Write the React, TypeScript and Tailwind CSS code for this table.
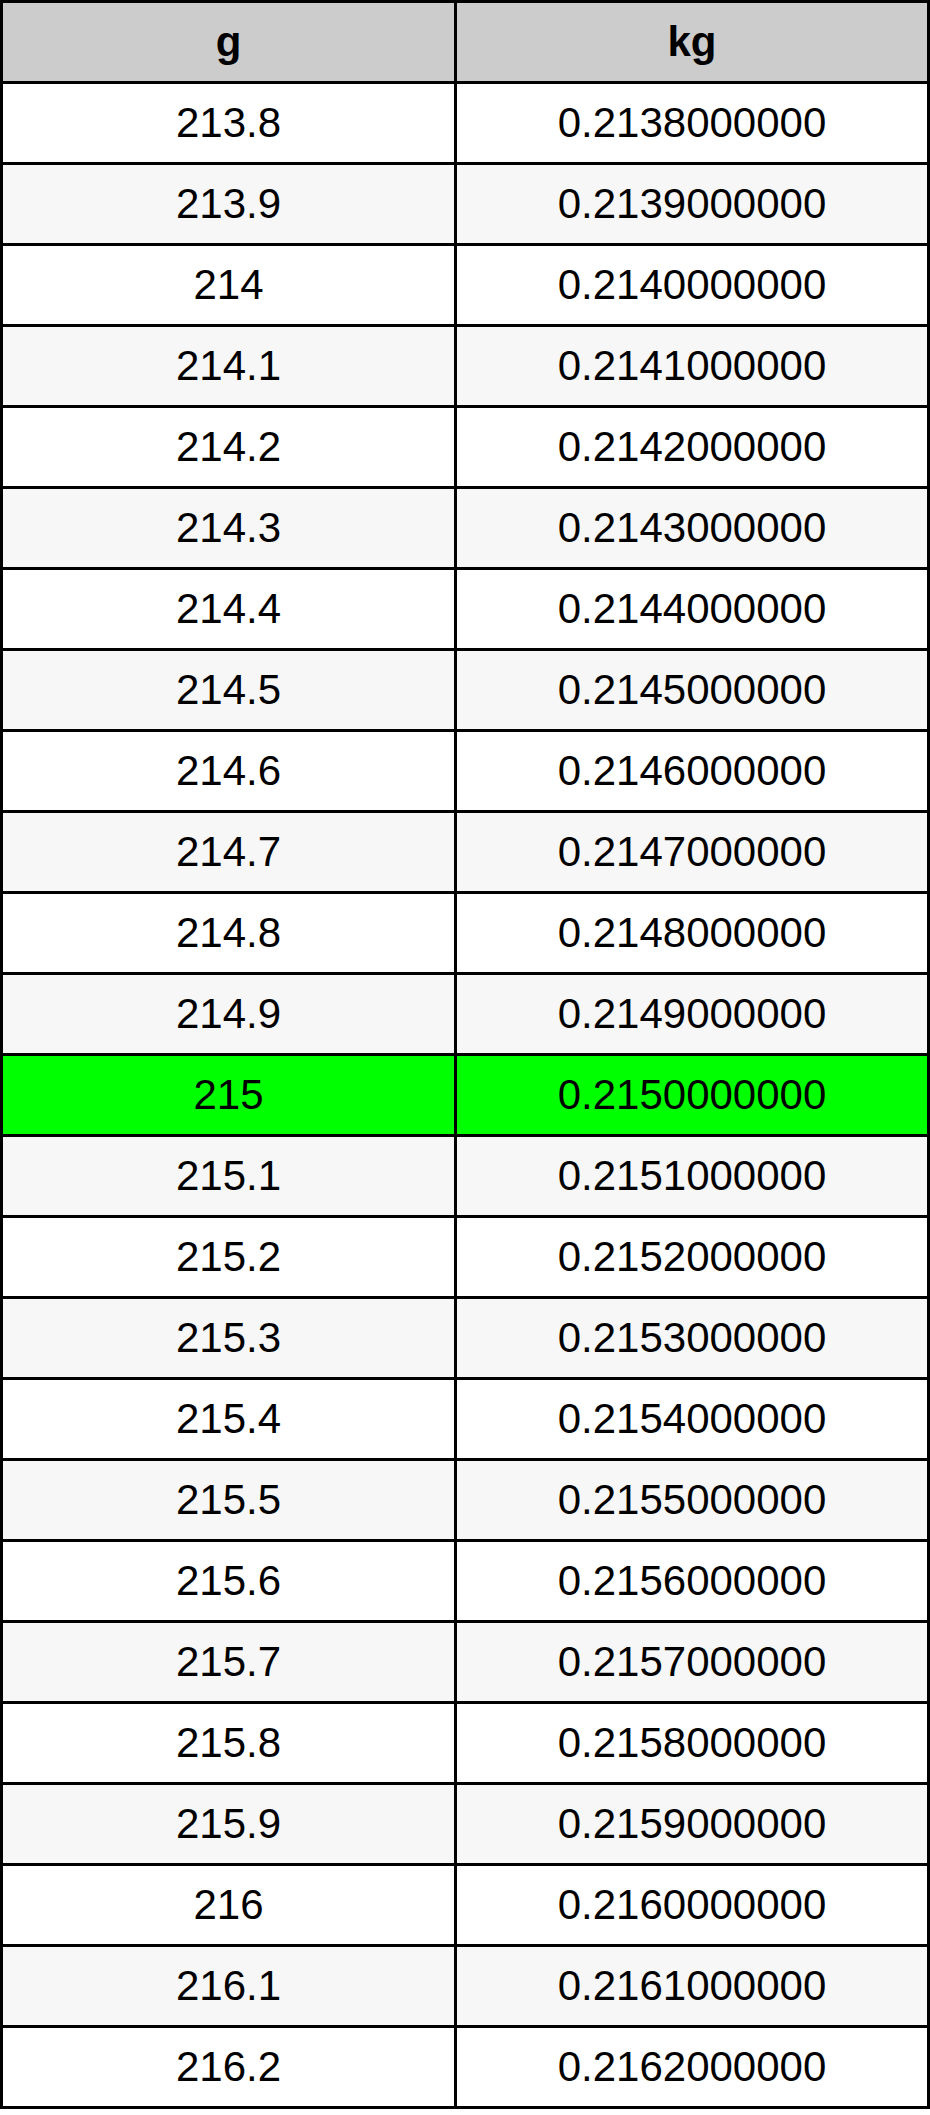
import React from "react";

const rows = [
    ["213.8", "0.2138000000"],
    ["213.9", "0.2139000000"],
    ["214", "0.2140000000"],
    ["214.1", "0.2141000000"],
    ["214.2", "0.2142000000"],
    ["214.3", "0.2143000000"],
    ["214.4", "0.2144000000"],
    ["214.5", "0.2145000000"],
    ["214.6", "0.2146000000"],
    ["214.7", "0.2147000000"],
    ["214.8", "0.2148000000"],
    ["214.9", "0.2149000000"],
    ["215", "0.2150000000"],
    ["215.1", "0.2151000000"],
    ["215.2", "0.2152000000"],
    ["215.3", "0.2153000000"],
    ["215.4", "0.2154000000"],
    ["215.5", "0.2155000000"],
    ["215.6", "0.2156000000"],
    ["215.7", "0.2157000000"],
    ["215.8", "0.2158000000"],
    ["215.9", "0.2159000000"],
    ["216", "0.2160000000"],
    ["216.1", "0.2161000000"],
    ["216.2", "0.2162000000"],
];

const cell = "flex items-center justify-center h-[81px] border-r-[3px] border-b-[3px] border-black";

const App: React.FC = () => {
    return (
        <div className="w-[930px] min-h-screen bg-white text-black text-[42px] leading-none font-['Liberation_Sans',Arial,sans-serif]">
            <div className="grid grid-cols-[454px_473px] border-l-[3px] border-t-[3px] border-black">
                <div className={`${cell} bg-[#cccccc] font-bold`}>g</div>
                <div className={`${cell} bg-[#cccccc] font-bold`}>kg</div>

                {rows.map((r, i) => {
                    const bg = r[0] === "215" ? "bg-[#00ff00]" : i % 2 === 1 ? "bg-[#f7f7f7]" : "bg-white";
                    return (
                        <React.Fragment key={i}>
                            <div className={`${cell} ${bg}`}>{r[0]}</div>
                            <div className={`${cell} ${bg}`}>{r[1]}</div>
                        </React.Fragment>
                    );
                })}
            </div>
        </div>
    );
};

export default App;
